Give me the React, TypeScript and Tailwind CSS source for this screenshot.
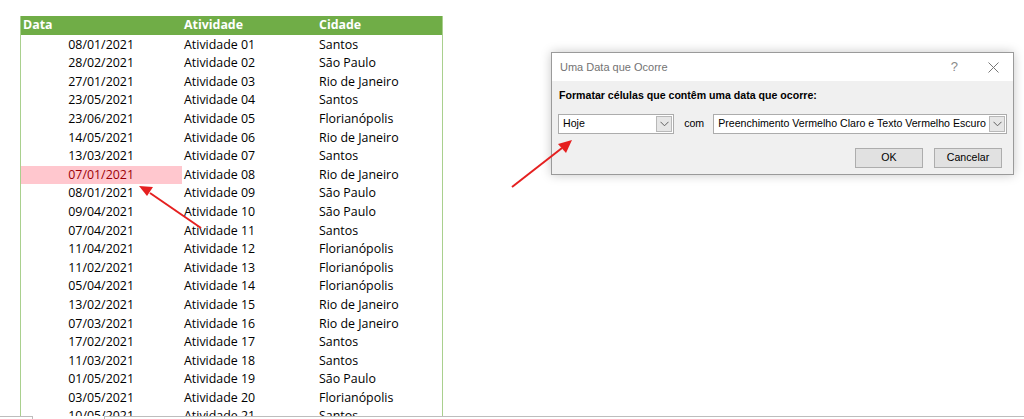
import React from 'react';

const rows: [string, string, string][] = [
  ['08/01/2021', 'Atividade 01', 'Santos'],
  ['28/02/2021', 'Atividade 02', 'São Paulo'],
  ['27/01/2021', 'Atividade 03', 'Rio de Janeiro'],
  ['23/05/2021', 'Atividade 04', 'Santos'],
  ['23/06/2021', 'Atividade 05', 'Florianópolis'],
  ['14/05/2021', 'Atividade 06', 'Rio de Janeiro'],
  ['13/03/2021', 'Atividade 07', 'Santos'],
  ['07/01/2021', 'Atividade 08', 'Rio de Janeiro'],
  ['08/01/2021', 'Atividade 09', 'São Paulo'],
  ['09/04/2021', 'Atividade 10', 'São Paulo'],
  ['07/04/2021', 'Atividade 11', 'Santos'],
  ['11/04/2021', 'Atividade 12', 'Florianópolis'],
  ['11/02/2021', 'Atividade 13', 'Florianópolis'],
  ['05/04/2021', 'Atividade 14', 'Florianópolis'],
  ['13/02/2021', 'Atividade 15', 'Rio de Janeiro'],
  ['07/03/2021', 'Atividade 16', 'Rio de Janeiro'],
  ['17/02/2021', 'Atividade 17', 'Santos'],
  ['11/03/2021', 'Atividade 18', 'Santos'],
  ['01/05/2021', 'Atividade 19', 'São Paulo'],
  ['03/05/2021', 'Atividade 20', 'Florianópolis'],
  ['10/05/2021', 'Atividade 21', 'Santos'],
];

function Chevron() {
  return (
    <svg width="9" height="6" viewBox="0 0 9 6" fill="none">
      <path d="M0.5 0.8 L4.5 4.8 L8.5 0.8" stroke="#606060" strokeWidth="1" />
    </svg>
  );
}

function Dropdown({ text, width }: { text: string; width: string }) {
  return (
    <div className={`flex h-[20px] items-stretch border border-[#acacac] bg-white ${width}`}>
      <div className="flex flex-1 items-center overflow-hidden whitespace-nowrap pl-[4px] text-black">{text}</div>
      <div className="m-[1px] flex w-[16px] items-center justify-center border border-[#b8b8b8] bg-[#e6e6e6]">
        <Chevron />
      </div>
    </div>
  );
}

export default function App() {
  return (
    <div className="relative flex h-[419px] w-[1024px] flex-col overflow-hidden bg-white">
      <div className="flex flex-1 overflow-hidden">
        {/* planilha */}
        <div
          className="ml-[20px] mt-[16px] w-[423px] border-x border-[#a9d08e] text-[12.4px] text-black"
          style={{ fontFamily: '"Open Sans", "Noto Sans", sans-serif' }}
        >
          <div className="flex h-[19px] items-center bg-[#70ad47] font-bold text-white">
            <div className="w-[161px] pl-[2px]">Data</div>
            <div className="w-[135px] pl-[2px]">Atividade</div>
            <div className="flex-1 pl-[2px]">Cidade</div>
          </div>
          {rows.map(([d, a, c], i) => (
            <div key={i} className="flex h-[18.6px] items-center pt-[1px] leading-none">
              <div
                className={
                  i === 7
                    ? 'flex h-full w-[161px] items-center justify-end bg-[#ffc7ce] pr-[48px] text-[#9c0006]'
                    : 'w-[161px] pr-[48px] text-right'
                }
              >
                {d}
              </div>
              <div className="w-[135px] pl-[2px]">{a}</div>
              <div className="flex-1 pl-[2px]">{c}</div>
            </div>
          ))}
        </div>

        {/* caixa de diálogo */}
        <div
          className="ml-[108px] mt-[52px] h-[123px] w-[463px] border border-[#9a9a9a] bg-[#f0f0f0] text-[10.6px] shadow-[0_0_10px_rgba(0,0,0,0.22)]"
          style={{ fontFamily: '"Liberation Sans", Arial, sans-serif' }}
        >
          <div className="flex h-[28px] items-center bg-white pl-[8px] pr-[14px] text-[11px] text-[#737373]">
            <span className="flex-1">Uma Data que Ocorre</span>
            <span className="mr-[30px] text-[13px] text-[#8a8a8a]">?</span>
            <svg width="11" height="11" viewBox="0 0 11 11">
              <path d="M0.5 0.5 L10.5 10.5 M10.5 0.5 L0.5 10.5" stroke="#777" strokeWidth="1" />
            </svg>
          </div>
          <div className="px-[6px] pt-[7px]">
            <div className="pl-[1px] font-bold text-black">Formatar células que contêm uma data que ocorre:</div>
            <div className="mt-[10px] flex items-center">
              <Dropdown text="Hoje" width="w-[117px]" />
              <span className="ml-[10px] mr-[9px] text-black">com</span>
              <Dropdown text="Preenchimento Vermelho Claro e Texto Vermelho Escuro" width="w-[296px]" />
            </div>
            <div className="mt-[14px] flex justify-end gap-[11px] pr-[5px]">
              <button className="h-[20px] w-[68px] border border-[#adadad] bg-[#e1e1e1] text-black">OK</button>
              <button className="h-[20px] w-[68px] border border-[#adadad] bg-[#e1e1e1] text-black">Cancelar</button>
            </div>
          </div>
        </div>
      </div>

      {/* barra inferior */}
      <div className="flex h-[3px]">
        <div className="w-[32px] border-t border-[#bdbdbd]" />
        <div className="w-[73px] border-x border-[#bdbdbd]" />
        <div className="flex-1 border-t border-[#bdbdbd]" />
      </div>

      {/* setas */}
      <svg className="pointer-events-none absolute left-0 top-0" width="1024" height="419">
        <line x1="201" y1="228" x2="150" y2="193" stroke="#e52020" strokeWidth="2" />
        <polygon points="139,186 153,187 147,196" fill="#e52020" />
        <line x1="512" y1="187" x2="562" y2="148" stroke="#e52020" strokeWidth="2" />
        <polygon points="572,140 566,153 558,144" fill="#e52020" />
      </svg>
    </div>
  );
}
